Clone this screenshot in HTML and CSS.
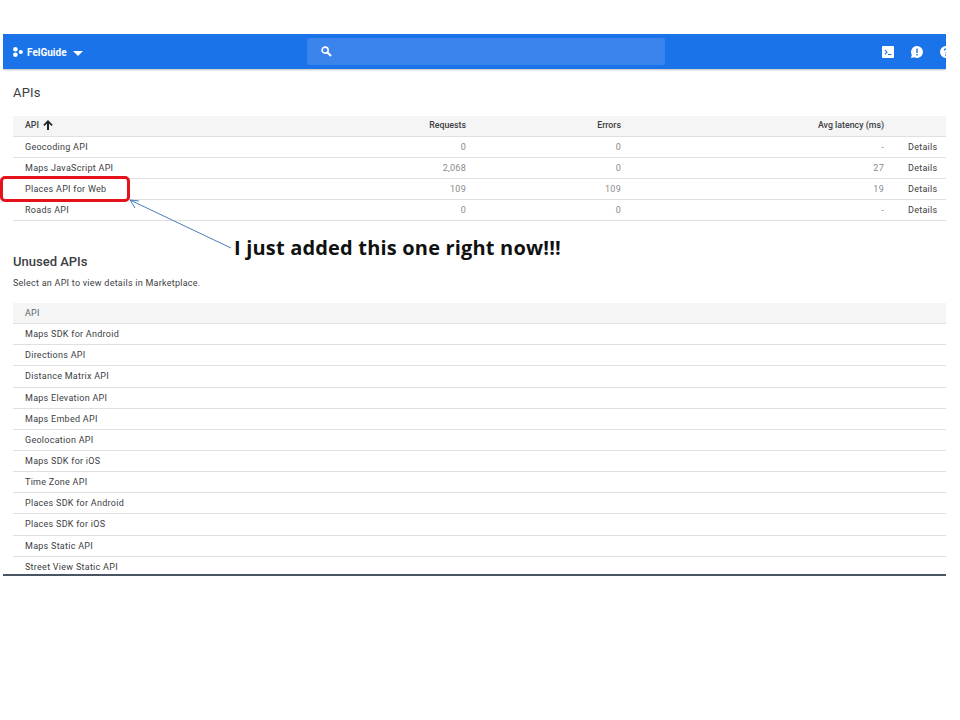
FILE: index.html
```html
<!DOCTYPE html>
<html lang="en">
<head>
<meta charset="utf-8">
<title>FelGuide APIs</title>
<link rel="stylesheet" href="styles.css">
</head>
<body>
<div class="slide">
  <div class="shot">
    <header class="topbar">
      <div class="brand">
        <svg class="logo" viewBox="0 0 10 10" width="10" height="10"><circle cx="2.4" cy="2.300" r="2.300"/><circle cx="2.400" cy="7.700" r="2.300"/><circle cx="7.800" cy="5" r="2.100"/></svg>
        <span class="brand-name">FelGuide</span>
        <svg class="caret" viewBox="0 0 10 5" width="10" height="5"><path d="M0 0h10L5 5z"/></svg>
      </div>
      <div class="search">
        <svg viewBox="0 0 12 12" width="11" height="11"><circle cx="4.500" cy="4.500" r="3.300" fill="none" stroke="#fff" stroke-width="1.800"/><path d="M7 7l4 4" fill="none" stroke="#fff" stroke-width="2.200"/></svg>
      </div>
      <div class="actions">
        <svg viewBox="0 0 12 12" width="12" height="12"><path fill-rule="evenodd" d="M1 0h10a1 1 0 0 1 1 1v10a1 1 0 0 1-1 1H1a1 1 0 0 1-1-1V1a1 1 0 0 1 1-1zm1.500 4.500L4.300 6.200 2.500 8l.8.700 2.500-2.500-2.500-2.500zM6 8v1h3.500V8z"/></svg>
        <svg viewBox="0 0 12 12" width="12" height="12"><path fill-rule="evenodd" d="M6 0a6 6 0 0 1 0 12c-1 0-2-.2-2.800-.7L0 12l.8-3.100A6 6 0 0 1 6 0zM5.300 2.500v4.500h1.400V2.500zm0 5.500v1.500h1.400V8z"/></svg>
        <svg viewBox="0 0 12 12" width="12" height="12"><path fill-rule="evenodd" d="M6 0a6 6 0 1 1 0 12A6 6 0 0 1 6 0zM5.300 8.500v1.400h1.400V8.500zM6 2.200A2.300 2.300 0 0 0 3.700 4.500H5A1 1 0 0 1 7 4.500c0 1-1.700 1-1.700 3h1.400c0-1.300 1.700-1.500 1.700-3A2.300 2.300 0 0 0 6 2.200z"/></svg>
      </div>
    </header>

    <main class="content">
      <h1 class="title">APIs</h1>
      <div class="table used">
        <div class="row head">
          <span class="name">API <svg class="sort" viewBox="0 0 10 10" width="10" height="10"><path d="M5 0l4.700 4.800-1.200 1.100-2.500-2.500V10H4V3.400L1.500 5.900.3 4.800z"/></svg></span>
          <span class="num">Requests</span><span class="num">Errors</span><span class="num">Avg latency (ms)</span><span class="link"></span>
        </div>
        <div class="row"><span class="name">Geocoding API</span><span class="num">0</span><span class="num">0</span><span class="num">-</span><span class="link">Details</span></div>
        <div class="row"><span class="name">Maps JavaScript API</span><span class="num">2,068</span><span class="num">0</span><span class="num">27</span><span class="link">Details</span></div>
        <div class="row"><span class="name">Places API for Web</span><span class="num">109</span><span class="num">109</span><span class="num">19</span><span class="link">Details</span></div>
        <div class="row"><span class="name">Roads API</span><span class="num">0</span><span class="num">0</span><span class="num">-</span><span class="link">Details</span></div>
      </div>

      <h2 class="subtitle">Unused APIs</h2>
      <p class="hint">Select an API to view details in Marketplace.</p>
      <div class="table unused">
        <div class="row head muted"><span class="name">API</span></div>
        <div class="row"><span class="name">Maps SDK for Android</span></div>
        <div class="row"><span class="name">Directions API</span></div>
        <div class="row"><span class="name">Distance Matrix API</span></div>
        <div class="row"><span class="name">Maps Elevation API</span></div>
        <div class="row"><span class="name">Maps Embed API</span></div>
        <div class="row"><span class="name">Geolocation API</span></div>
        <div class="row"><span class="name">Maps SDK for iOS</span></div>
        <div class="row"><span class="name">Time Zone API</span></div>
        <div class="row"><span class="name">Places SDK for Android</span></div>
        <div class="row"><span class="name">Places SDK for iOS</span></div>
        <div class="row"><span class="name">Maps Static API</span></div>
        <div class="row"><span class="name">Street View Static API</span></div>
      </div>
    </main>
  </div>

  <div class="highlight"></div>
  <svg class="arrow" viewBox="0 0 110 56" width="110" height="56">
    <path d="M104 50L3 2M12 3L3 2L8 10" fill="none" stroke="#4a7ebb" stroke-width="1"/>
  </svg>
  <div class="callout">I just added this one right now!!!</div>
</div>
</body>
</html>
```

FILE: styles.css
```css
* { box-sizing: border-box; }
html, body { margin: 0; padding: 0; background: #fff; }
body { width: 960px; height: 720px; overflow: hidden; font-family: Roboto, "Liberation Sans", sans-serif; }

.slide { position: relative; width: 960px; height: 720px; padding: 34px 14px 0 3px; }
.shot { height: 542px; overflow: hidden; border-bottom: 2px solid #4a5563; background: #fff; }

.topbar { height: 35px; background: #1a73e8; display: flex; align-items: center; color: #fff; box-shadow: 0 1px 2px rgba(60, 64, 67, .35); position: relative; }
.brand { width: 304px; padding: 1px 0 0 10px; display: flex; align-items: center; }
.logo { fill: #fff; margin-right: 4px; }
.brand-name { font-size: 10px; font-weight: 700; }
.caret { fill: #fff; margin: 2px 0 0 6px; }
.search { width: 358px; height: 27px; background: #3b84ec; border-radius: 2px; display: flex; align-items: center; padding-left: 14px; }
.actions { flex: 1; display: flex; justify-content: flex-start; gap: 17px; padding-left: 217px; overflow: hidden; height: 35px; align-items: center; }
.actions svg { fill: #fff; flex: none; }

.content { padding: 0 0 0 10px; }
.title { margin: 0; padding-top: 16px; height: 47px; font-size: 13px; line-height: 16px; font-weight: 400; color: #3c4043; letter-spacing: .2px; }

.row { display: grid; grid-template-columns: 300px 141px 155px 263px 1fr; height: 21px; align-items: center; padding-left: 12px; border-bottom: 1px solid #e0e0e0; font-size: 9px; letter-spacing: .27px; color: #3c4043; }
.unused .row { height: 21.150px; }
.head { background: #f5f5f5; font-weight: 500; font-size: 8.800px; letter-spacing: 0; }
.used .head { padding-bottom: 2px; }
.head.muted { font-weight: 400; font-size: 9px; letter-spacing: .2px; color: #5f6368; }
.num { text-align: right; color: #8a8a8a; }
.head .num { color: #3c4043; }
.link { padding-left: 24px; }
.name { display: flex; align-items: center; gap: 4px; }
.sort { fill: #202124; }

.subtitle { margin: 0; padding-top: 33px; height: 52px; font-size: 13px; line-height: 16px; font-weight: 500; color: #3c4043; }
.hint { margin: 0; height: 30px; padding-top: 4px; font-size: 9px; line-height: 12px; letter-spacing: .25px; color: #3c4043; }

.highlight { position: absolute; left: 0; top: 176px; width: 130px; height: 26px; border: 3px solid #e5121b; border-radius: 5px; }
.arrow { position: absolute; left: 127px; top: 198px; }
.callout { position: absolute; left: 234px; top: 235px; font-family: "Open Sans", sans-serif; font-weight: 700; font-size: 20px; letter-spacing: .18px; line-height: 26px; color: #111; white-space: nowrap; }
```
